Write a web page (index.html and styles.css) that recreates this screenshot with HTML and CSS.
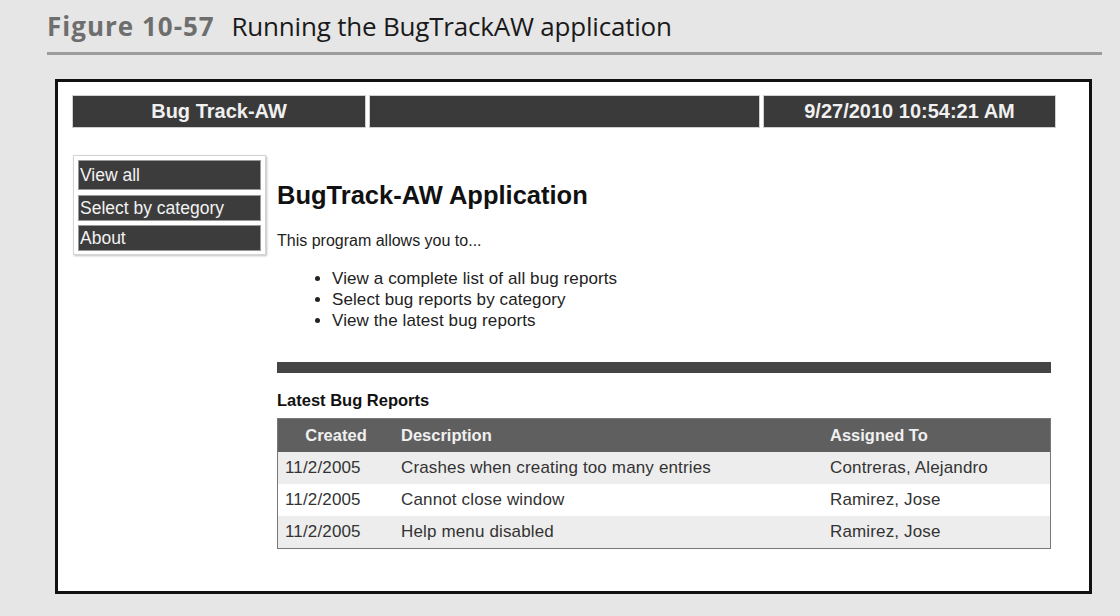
FILE: index.html
```html
<!DOCTYPE html>
<html lang="en">
<head>
    <meta charset="UTF-8">
    <title>Figure 10-57 Running the BugTrackAW application</title>
    <link rel="stylesheet" href="styles.css">
</head>
<body>
    <div class="caption">
        <span class="fig-num">Figure 10-57</span>
        <span class="fig-title">Running the BugTrackAW application</span>
    </div>

    <div class="screen">
        <div class="topbar">
            <div class="topbar-cell title">Bug Track-AW</div>
            <div class="topbar-cell middle"></div>
            <div class="topbar-cell clock">9/27/2010 10:54:21 AM</div>
        </div>

        <div class="page">
            <div class="menu">
                <a class="menu-item first" href="#">View all</a>
                <a class="menu-item" href="#">Select by category</a>
                <a class="menu-item" href="#">About</a>
            </div>

            <div class="main">
                <h1>BugTrack-AW Application</h1>
                <p class="intro">This program allows you to...</p>
                <ul class="features">
                    <li>View a complete list of all bug reports</li>
                    <li>Select bug reports by category</li>
                    <li>View the latest bug reports</li>
                </ul>

                <div class="divider"></div>

                <h2>Latest Bug Reports</h2>
                <table class="reports">
                    <thead>
                        <tr>
                            <th class="col-created">Created</th>
                            <th class="col-desc">Description</th>
                            <th class="col-assigned">Assigned To</th>
                        </tr>
                    </thead>
                    <tbody>
                        <tr>
                            <td>11/2/2005</td>
                            <td>Crashes when creating too many entries</td>
                            <td>Contreras, Alejandro</td>
                        </tr>
                        <tr>
                            <td>11/2/2005</td>
                            <td>Cannot close window</td>
                            <td>Ramirez, Jose</td>
                        </tr>
                        <tr>
                            <td>11/2/2005</td>
                            <td>Help menu disabled</td>
                            <td>Ramirez, Jose</td>
                        </tr>
                    </tbody>
                </table>
            </div>
        </div>
    </div>
</body>
</html>
```

FILE: styles.css
```css
html, body {
    margin: 0;
    padding: 0;
}
body {
    background-color: #e6e6e6;
    width: 1120px;
    height: 616px;
    overflow: hidden;
}
.caption {
    font-family: "Open Sans", "Noto Sans", sans-serif;
    font-size: 26px;
    line-height: 34px;
    padding: 9px 0 0 47px;
}
.fig-num {
    font-weight: bold;
    color: #6e6e6e;
    letter-spacing: 1px;
    margin-right: 10px;
}
.fig-title {
    color: #1a1a1a;
    letter-spacing: -0.2px;
}
.caption::after {
    content: "";
    display: block;
    margin-top: 9px;
    width: 1055px;
    height: 3px;
    background-color: #9c9c9c;
}
.screen {
    margin: 24px 0 0 55px;
    width: 1031px;
    height: 496px;
    border: 3px solid #111;
    background: #fff;
    padding: 13px 0 0 0;
    font-family: "Liberation Sans", Arial, sans-serif;
    color: #222;
}
.topbar {
    display: flex;
    gap: 3px;
    margin-left: 14px;
    width: 984px;
    height: 33px;
}
.topbar-cell {
    background-color: #3a3a3a;
    border: 1px solid #cfcfcf;
    color: #f0f0f0;
    font-weight: bold;
    font-size: 20px;
    line-height: 31px;
    text-align: center;
    box-sizing: border-box;
}
.title {
    width: 294px;
}
.middle {
    width: 391px;
}
.clock {
    width: 293px;
}
.page {
    display: flex;
    margin-top: 27px;
    margin-left: 15px;
}
.menu {
    width: 193px;
    height: 100px;
    box-sizing: border-box;
    border: 1px solid #d4d4d4;
    box-shadow: 1px 1px 2px rgba(0, 0, 0, 0.25);
    padding: 4px;
    display: flex;
    flex-direction: column;
    gap: 4px;
}
.menu-item {
    display: block;
    background-color: #3c3c3c;
    border: 1px solid #9a9a9a;
    color: #f2f2f2;
    text-decoration: none;
    font-size: 17.5px;
    line-height: 24px;
    height: 26px;
    padding-left: 1px;
    box-sizing: border-box;
}
.menu-item.first {
    height: 30px;
    line-height: 28px;
    margin-bottom: 1px;
}
.main {
    margin-left: 11px;
    width: 774px;
}
h1 {
    font-size: 25.5px;
    line-height: 28px;
    margin: 26px 0 0 0;
    color: #111;
}
.intro {
    font-size: 16px;
    line-height: 20px;
    margin: 22px 0 0 0;
}
.features {
    margin: 17px 0 0 0;
    padding-left: 55px;
    font-size: 17px;
    letter-spacing: 0.1px;
    line-height: 21px;
}
.divider {
    margin-top: 31px;
    height: 11px;
    background-color: #454545;
}
h2 {
    font-size: 16.5px;
    line-height: 20px;
    margin: 17px 0 0 0;
    color: #111;
}
.reports {
    margin-top: 8px;
    width: 774px;
    border-collapse: collapse;
    border: 1px solid #777;
    font-size: 17px;
    letter-spacing: 0.15px;
}
.reports th {
    background-color: #5f5f5f;
    color: #f0f0f0;
    font-size: 16.5px;
    letter-spacing: 0;
    text-align: left;
    height: 33px;
    padding: 0 7px;
}
.reports th.col-created {
    text-align: center;
}
.reports td {
    height: 32px;
    padding: 0 7px;
    color: #333;
}
.col-created {
    width: 102px;
}
.col-desc {
    width: 415px;
}
.reports tbody tr:nth-child(odd) {
    background-color: #ededed;
}
.reports tbody tr:nth-child(even) {
    background-color: #fff;
}
```
